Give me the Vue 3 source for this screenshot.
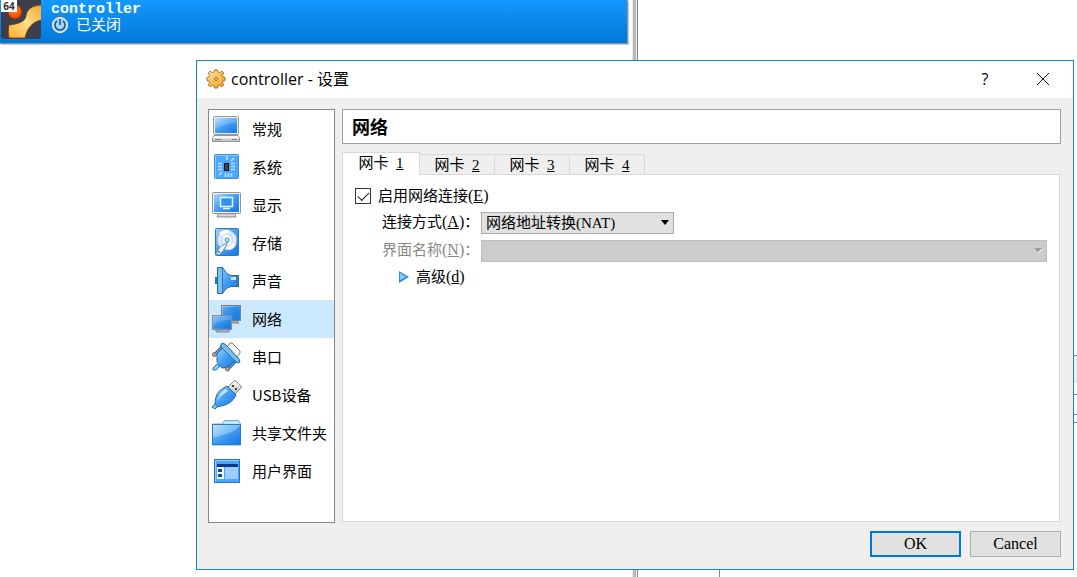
<template>
  <div class="desktop">
    <div class="manager">
      <div class="machines">
        <div class="machine">
          <div class="machine-logo">
            <svg viewBox="0 0 40 39" width="40" height="39">
              <defs>
                <linearGradient id="gold" x1="0" y1="1" x2="1" y2="0">
                  <stop offset="0" stop-color="#ffa826" />
                  <stop offset="0.5" stop-color="#ffdf8c" />
                  <stop offset="1" stop-color="#f0a52c" />
                </linearGradient>
                <radialGradient id="ball" cx="0.4" cy="0.3" r="0.8">
                  <stop offset="0" stop-color="#ff9a4a" />
                  <stop offset="0.6" stop-color="#fb5600" />
                  <stop offset="1" stop-color="#c93c00" />
                </radialGradient>
              </defs>
              <path d="M0 0h40v36q0 3-3 3H3q-3 0-3-3z" fill="#3b3f4d" />
              <path d="M41 5v15c-9 1-15 8-17 18H8c-1-5-1-9 0-13c9-1 16-3 17-9c0-5 5-11 16-11z" fill="url(#gold)" stroke="#7d4714" />
              <circle cx="14" cy="12" r="7" fill="url(#ball)" stroke="#8c3510" />
            </svg>
            <span class="badge">64</span>
          </div>
          <div class="machine-text">
            <div class="machine-name">controller</div>
            <div class="machine-state">
              <svg viewBox="0 0 18 18" width="18" height="18">
                <circle cx="9" cy="9" r="8.5" fill="#a9d5fa" stroke="#2d70b4" />
                <circle cx="9" cy="9" r="7.5" fill="none" stroke="#e5f4ff" />
                <path d="M6 5a5 5 0 1 0 6 0M9 3v6" fill="none" stroke="#165aa0" stroke-width="1.6" />
              </svg>
              <span>已关闭</span>
            </div>
          </div>
        </div>
      </div>
      <div class="splitter"></div>
      <div class="details"><div class="details-line"></div></div>
    </div>
    <div class="edge"></div>

    <main class="dialog">
      <header class="titlebar">
        <svg viewBox="0 0 22 22" width="20" height="20">
          <defs>
            <linearGradient id="gear" x1="0" y1="0" x2="1" y2="1">
              <stop offset="0" stop-color="#fff0c4" />
              <stop offset="0.5" stop-color="#fdbb45" />
              <stop offset="1" stop-color="#ee9820" />
            </linearGradient>
          </defs>
          <path d="M9.500 1h3l1 2.500 1.500.5 2.500-1.500 2 2-1.500 2.500.5 1.500 2.500 1v3l-2.500 1-.5 1.500 1.500 2.500-2 2-2.500-1.500-1.500.5-1 2.500h-3l-1-2.500-1.500-.5-2.500 1.500-2-2 1.500-2.500-.5-1.500-2.500-1v-3l2.500-1 .5-1.500-1.500-2.500 2-2 2.500 1.500 1.500-.5z" fill="url(#gear)" stroke="#9b642b" stroke-linejoin="round" />
          <circle cx="11" cy="11" r="5" fill="none" stroke="#fbd17c" />
          <circle cx="11" cy="11" r="1.500" fill="#fff" stroke="#91591e" />
        </svg>
        <h1>controller - 设置</h1>
        <button class="title-button" aria-label="帮助">?</button>
        <button class="title-button" aria-label="关闭">
          <svg viewBox="0 0 14 14" width="14" height="14"><path d="M1 1l12 12M13 1L1 13" stroke="#111" fill="none" /></svg>
        </button>
      </header>

      <div class="content">
        <nav class="sidebar">
          <button
            v-for="item in sections"
            :key="item.id"
            class="section"
            :class="{ active: item.id === section }"
            @click="section = item.id"
          >
            <svg viewBox="0 0 32 32" width="32" height="32">
              <defs>
                <linearGradient :id="item.id + '-blue'" x1="0" y1="0" x2="1" y2="1">
                  <stop offset="0" stop-color="#a6d8ff" />
                  <stop offset="0.45" stop-color="#48a1f5" />
                  <stop offset="1" stop-color="#1675e6" />
                </linearGradient>
                <linearGradient :id="item.id + '-grey'" x1="0" y1="0" x2="0" y2="1">
                  <stop offset="0" stop-color="#fff" />
                  <stop offset="1" stop-color="#b9b9b9" />
                </linearGradient>
              </defs>
              <g v-if="item.id === 'general'">
                <rect x="2.500" y="3.500" width="25" height="18" rx="1" fill="#eee" stroke="#979797" />
                <rect x="4" y="5" width="22" height="15" :fill="blue(item)" />
                <path d="M4 5h22v5Q13 10 4 16z" fill="#fff" opacity="0.18" />
                <path d="M3 22.500h24l1.500 2v4h-27v-4z" :fill="grey(item)" stroke="#989898" />
                <path d="M2 24.500h26" stroke="#fff" />
                <path d="M4 26.500h6M21 26.500h5" stroke="#888" />
              </g>
              <g v-else-if="item.id === 'system'">
                <rect x="3.500" y="3.500" width="24" height="24" rx="1" fill="#4ba7ff" stroke="#3a8edb" />
                <path d="M4.500 27V4.500H27" fill="none" stroke="#8bcaff" />
                <rect x="13.500" y="12.500" width="4" height="7" fill="#3e4548" stroke="#111" />
                <path d="M16 5v4M23 7l-3 3M7 12.500h4M7 15.500h4M7 18.500h4M20 12.500h4M20 15.500h4M20 18.500h4M11 21l-3 3M14.500 22v4M17.500 22v4M20.500 22v4" stroke="#d5edff" stroke-width="1.500" opacity="0.85" />
              </g>
              <g v-else-if="item.id === 'display'">
                <rect x="1.500" y="3.500" width="28" height="21" rx="1" fill="#f3f3f3" stroke="#929292" />
                <rect x="3" y="5" width="25" height="18" :fill="blue(item)" />
                <rect x="9.500" y="8.500" width="12" height="9" fill="#3292ef" stroke="#e7f5ff" stroke-width="1.500" />
                <path d="M12 19.500h7" stroke="#e7f5ff" stroke-width="1.500" />
                <path d="M7 25h17l1 3H6z" :fill="grey(item)" stroke="#929292" />
              </g>
              <g v-else-if="item.id === 'storage'">
                <rect x="4.500" y="1.500" width="23" height="27" rx="1" :fill="blue(item)" stroke="#2977bd" />
                <circle cx="16" cy="13" r="10" fill="#dcecf8" stroke="#8dacc5" />
                <path d="M16 13L8 6q4-4 10-3zM16 13l9 5q-3 5-8 5z" fill="#fff" />
                <circle cx="16" cy="13" r="6" fill="none" stroke="#c3d8e8" />
                <circle cx="16" cy="13" r="3" fill="#5ca5e1" stroke="#fff" />
                <circle cx="16" cy="13" r="1" fill="#fff" />
                <path d="M5 27l4-7 8-5-5 9-4 4z" fill="#f0f5f9" stroke="#6793b8" />
                <circle cx="8" cy="25" r="1" fill="#377cae" />
              </g>
              <g v-else-if="item.id === 'audio'">
                <path d="M4 12h3v7H4z" fill="#2474c0" />
                <path d="M6.500 2.500H11q1 0 2 2 2 5 7 6h7.500v11H20q-5 1-7 5-1 2-2 2H6.500z" :fill="blue(item)" stroke="#28659d" />
                <path d="M7 3h4v25H7z" fill="#79bff3" />
                <path d="M11.500 3v25M25.500 10v12" stroke="#3475aa" />
                <path d="M20 12h5v3h-5z" fill="#c4e6ff" />
              </g>
              <g v-else-if="item.id === 'network'">
                <path d="M15 18h11l2 2H14z" fill="#b9c5cf" stroke="#6d7f90" />
                <rect x="10.500" y="2.500" width="19" height="15" :fill="blue(item)" stroke="#75818c" />
                <rect x="12" y="4" width="16" height="12" fill="#1676d5" opacity="0.45" />
                <path d="M5 27h13v2H5z" fill="#b9c5cf" stroke="#768692" />
                <rect x="1.500" y="12.500" width="19" height="14" :fill="blue(item)" stroke="#828e99" />
                <rect x="3" y="14" width="16" height="11" fill="#1677da" opacity="0.4" />
                <path d="M3 14h16v3Q10 17 3 21z" fill="#b6ddff" opacity="0.3" />
              </g>
              <g v-else-if="item.id === 'serial'">
                <path d="M16 6l3-4h2l8 8v2l-3 4z" fill="#f7f7f7" stroke="#777" />
                <path d="M12 6l-6 6v9l5 6q6 0 9-2l5-6z" :fill="blue(item)" stroke="#286ba8" />
                <path d="M6 23l-4 4v2h3l4-4z" fill="#8bcaff" stroke="#2574b3" />
                <path d="M11 6l-7 7M25 20l-8 8" stroke="#28689f" stroke-width="3" />
                <path d="M11 6l-7 7M25 20l-8 8" stroke="#79bdf3" />
                <circle cx="3.500" cy="13.500" r="2" fill="#aaa" stroke="#666" />
                <circle cx="16.500" cy="28" r="2" fill="#aaa" stroke="#666" />
                <path d="M10 3l2-1 3 2 13 14 1 3-2 1-3-2L10 6z" fill="#75bdf7" stroke="#28689f" />
              </g>
              <g v-else-if="item.id === 'usb'">
                <path d="M17 8l6-6q1-1 2 0l5 5q1 1 0 2l-6 6z" :fill="grey(item)" stroke="#8b8b8b" />
                <rect x="21" y="6" width="2" height="2" fill="#444" />
                <rect x="24" y="9" width="2" height="2" fill="#444" />
                <path d="M16 7l9 9q-4 9-15 11l-5 1-1-3q0-11 7-15z" :fill="blue(item)" stroke="#1f6dad" />
                <path d="M15 10Q8 13 6 24q1-6 11-12z" fill="#e4f5ff" opacity="0.8" />
                <path d="M4 25l3 2-3 3-3-2z" fill="#80c1f7" stroke="#276aa5" />
              </g>
              <g v-else-if="item.id === 'folders'">
                <path d="M11.500 7l2-3.500h14l2 3.500v21h-28V7z" fill="#c1e6fb" stroke="#75acd0" />
                <rect x="1.500" y="7.500" width="28" height="20" :fill="blue(item)" stroke="#277cbc" />
                <path d="M2 8h27q-4 8-27 12z" fill="#ddf4ff" opacity="0.38" />
              </g>
              <g v-else>
                <rect x="3.500" y="4.500" width="25" height="23" fill="#49a6ff" stroke="#2772c8" />
                <path d="M4.500 27V5.500H28" fill="none" stroke="#91ceff" />
                <rect x="6" y="9" width="21" height="3" fill="#063b87" />
                <rect x="6" y="12" width="7" height="12" fill="#f7fbff" />
                <rect x="14" y="12" width="13" height="12" fill="#9dccff" />
                <path d="M7 14h4v3H7zM7 19h4v3H7z" fill="#0c4a9a" />
              </g>
            </svg>
            <span>{{ item.label }}</span>
          </button>
        </nav>

        <section class="page">
          <h2>网络</h2>
          <div class="tabs" role="tablist">
            <button
              v-for="n in 4"
              :key="n"
              class="tab"
              :class="{ active: n === adapter }"
              role="tab"
              :aria-selected="n === adapter"
              @click="adapter = n"
            >
              网卡&nbsp;&nbsp;<u>{{ n }}</u>
            </button>
          </div>
          <div class="panel">
            <label class="enable">
              <input v-model="enabled" type="checkbox" />
              <span>启用网络连接<span class="key">(<u>E</u>)</span></span>
            </label>
            <div class="fields">
              <label for="attached">连接方式<span class="key">(<u>A</u>)</span>：</label>
              <div class="combo attached">
                <select id="attached" v-model="attachment">
                  <option value="nat">网络地址转换(NAT)</option>
                </select>
                <svg viewBox="0 0 8 5" width="8" height="5"><path d="M0 0h8L4 5z" fill="#000" /></svg>
              </div>
              <label for="interface" class="disabled">界面名称<span class="key">(<u>N</u>)</span>：</label>
              <div class="combo disabled">
                <select id="interface" disabled></select>
                <svg viewBox="0 0 8 5" width="8" height="5">
                  <path d="M8 1v1L5 5H4" fill="#fff" />
                  <path d="M0 0h8L4 4z" fill="#999" />
                </svg>
              </div>
            </div>
            <button class="advanced">
              <svg viewBox="0 0 10 12" width="10" height="12">
                <path d="M0 0l10 6-10 6z" fill="#328bdc" />
                <path d="M1 2l6 4-6 3z" fill="#8acaff" />
              </svg>
              <span>高级<span class="key">(<u>d</u>)</span></span>
            </button>
          </div>
        </section>
      </div>

      <footer>
        <button class="push default">OK</button>
        <button class="push">Cancel</button>
      </footer>
    </main>
  </div>
</template>

<script setup>
import { ref } from 'vue'

const sections = [
  { id: 'general', label: '常规' },
  { id: 'system', label: '系统' },
  { id: 'display', label: '显示' },
  { id: 'storage', label: '存储' },
  { id: 'audio', label: '声音' },
  { id: 'network', label: '网络' },
  { id: 'serial', label: '串口' },
  { id: 'usb', label: 'USB设备' },
  { id: 'folders', label: '共享文件夹' },
  { id: 'interface', label: '用户界面' }
]

const section = ref('network')
const adapter = ref(1)
const enabled = ref(true)
const attachment = ref('nat')

const blue = (item) => `url(#${item.id}-blue)`
const grey = (item) => `url(#${item.id}-grey)`
</script>

<style>
body {
  margin: 0;
  background: #fff;
}
</style>

<style scoped>
.desktop {
  position: relative;
  display: flex;
  min-height: 100vh;
  color: #000;
  font: 15px/20px "Liberation Serif", "Noto Sans CJK SC", sans-serif;
}

.desktop * {
  box-sizing: border-box;
}

button {
  padding: 0;
  border: 0;
  background: none;
  color: inherit;
  font: inherit;
}

svg {
  display: block;
  flex: none;
}

/* main window behind the dialog */
.manager {
  position: absolute;
  inset: 0;
  display: flex;
}

.machines {
  width: 632px;
  padding-right: 4px;
}

.machine {
  display: flex;
  gap: 10px;
  height: 44px;
  padding-left: 1px;
  border-right: 1px solid #7999b5;
  border-bottom: 1px solid #8998a5;
  background: linear-gradient(#1598ff, #0078d7);
  box-shadow: 1px 1px #c9c9c9;
  color: #fff;
}

.machine-logo {
  position: relative;
}

.badge {
  position: absolute;
  top: 0;
  left: 0;
  width: 16px;
  background: #fff;
  color: #333;
  font: bold 10px/12px "Open Sans", sans-serif;
  text-align: center;
}

.machine-name {
  height: 16px;
  font: bold 15px/20px "Liberation Mono", monospace;
}

.machine-state {
  display: flex;
  align-items: center;
  gap: 7px;
  line-height: 16px;
}

.splitter {
  width: 6px;
  border-right: 1px solid #85858d;
  background: linear-gradient(90deg, #e8e8e8 1px, #b8b8b8 1px, #b8b8b8 4px, #ededed 4px);
}

.details {
  flex: 1;
  display: flex;
  align-items: flex-end;
}

.details-line {
  width: 82px;
  height: 7px;
  border-right: 1px solid #828790;
}

.edge {
  position: absolute;
  top: 355px;
  right: 0;
  width: 3px;
  height: 68px;
  background: linear-gradient(#828282 1px, #efefef 1px, #efefef 26px, #d9d9d9 26px, #d9d9d9 27px, #fff 27px, #fff 39px, #828282 39px, #828282 40px, #fff 40px, #fff 59px, #828282 59px, #828282 60px, #fff 60px, #fff 67px, #828282 67px);
}

.dialog {
  position: relative;
  flex: 1;
  display: flex;
  flex-direction: column;
  margin: 60px 3px 7px 196px;
  border: 1px solid #1b80d0;
  background: #efefef;
}

.titlebar {
  display: flex;
  align-items: center;
  height: 37px;
  padding: 0 1px 2px 9px;
  background: #fff;
}

h1 {
  flex: 1;
  margin: 0 0 0 5px;
  font: 16px/20px "Open Sans", "Noto Sans CJK SC", sans-serif;
}

.title-button {
  display: flex;
  align-items: center;
  justify-content: center;
  width: 58px;
  height: 35px;
  font: 16px/20px "Open Sans", sans-serif;
}

.content {
  flex: 1;
  display: flex;
  gap: 7px;
  padding: 11px 12px 0 11px;
}

.sidebar {
  width: 127px;
  border: 1px solid #828790;
  background: #fff;
}

.section {
  display: flex;
  align-items: center;
  gap: 9px;
  width: 100%;
  height: 38px;
  padding-left: 2px;
  font: 15px/20px "Noto Sans CJK SC", sans-serif;
  white-space: nowrap;
}

.section.active {
  background: #cce8ff;
}

.page {
  flex: 1;
  display: flex;
  flex-direction: column;
}

h2 {
  height: 35px;
  margin: 0 0 8px;
  padding-left: 9px;
  border: 1px solid #a0a0a0;
  background: #fff;
  font: bold 18px/32px "Noto Sans CJK SC", sans-serif;
}

.tabs {
  display: flex;
  align-items: flex-end;
  height: 22px;
}

.tab {
  width: 75px;
  height: 20px;
  border: 1px solid #d9d9d9;
  border-width: 1px 1px 0 0;
}

.tab.active {
  z-index: 1;
  width: 78px;
  height: 23px;
  margin-bottom: -1px;
  padding-bottom: 2px;
  border-left-width: 1px;
  background: #fff;
}

.panel {
  flex: 1;
  margin: 0 1px 1px 0;
  padding: 11px 12px;
  border: 1px solid #d9d9d9;
  background: #fff;
}

.key {
  font-size: 16px;
}

.enable {
  display: flex;
  align-items: center;
  gap: 7px;
  width: max-content;
}

.enable input {
  appearance: none;
  display: grid;
  place-items: center;
  width: 16px;
  height: 16px;
  margin: 0;
  border: 1px solid #333;
  background: #fff;
}

.enable input:checked::after {
  content: "";
  width: 10px;
  height: 5px;
  margin-bottom: 3px;
  border: solid #222;
  border-width: 0 0 1px 1px;
  transform: rotate(-45deg);
}

.fields {
  display: grid;
  grid-template-columns: 99px 1fr;
  gap: 6px 0;
  margin-top: 6px;
  padding-left: 27px;
}

.fields label {
  white-space: nowrap;
}

label.disabled {
  color: #888;
}

.combo {
  position: relative;
  height: 22px;
}

.combo.attached {
  width: 193px;
}

.combo select {
  appearance: none;
  display: block;
  width: 100%;
  height: 22px;
  padding: 0 20px 0 4px;
  border: 1px solid #adadad;
  border-radius: 0;
  background: #e1e1e1;
  color: #000;
  font: inherit;
}

.combo select:disabled {
  border-color: #bfbfbf;
  background: #ccc;
  opacity: 1;
}

.combo svg {
  position: absolute;
  top: 8px;
  right: 5px;
  pointer-events: none;
}

.advanced {
  display: flex;
  align-items: center;
  gap: 7px;
  margin: 5px 0 0 44px;
}

footer {
  display: flex;
  justify-content: flex-end;
  gap: 9px;
  padding: 8px 12px 12px;
}

.push {
  width: 91px;
  height: 26px;
  border: 1px solid #adadad;
  background: #e1e1e1;
  font-size: 16px;
}

.push.default {
  border: 2px solid #0078d7;
}
</style>
